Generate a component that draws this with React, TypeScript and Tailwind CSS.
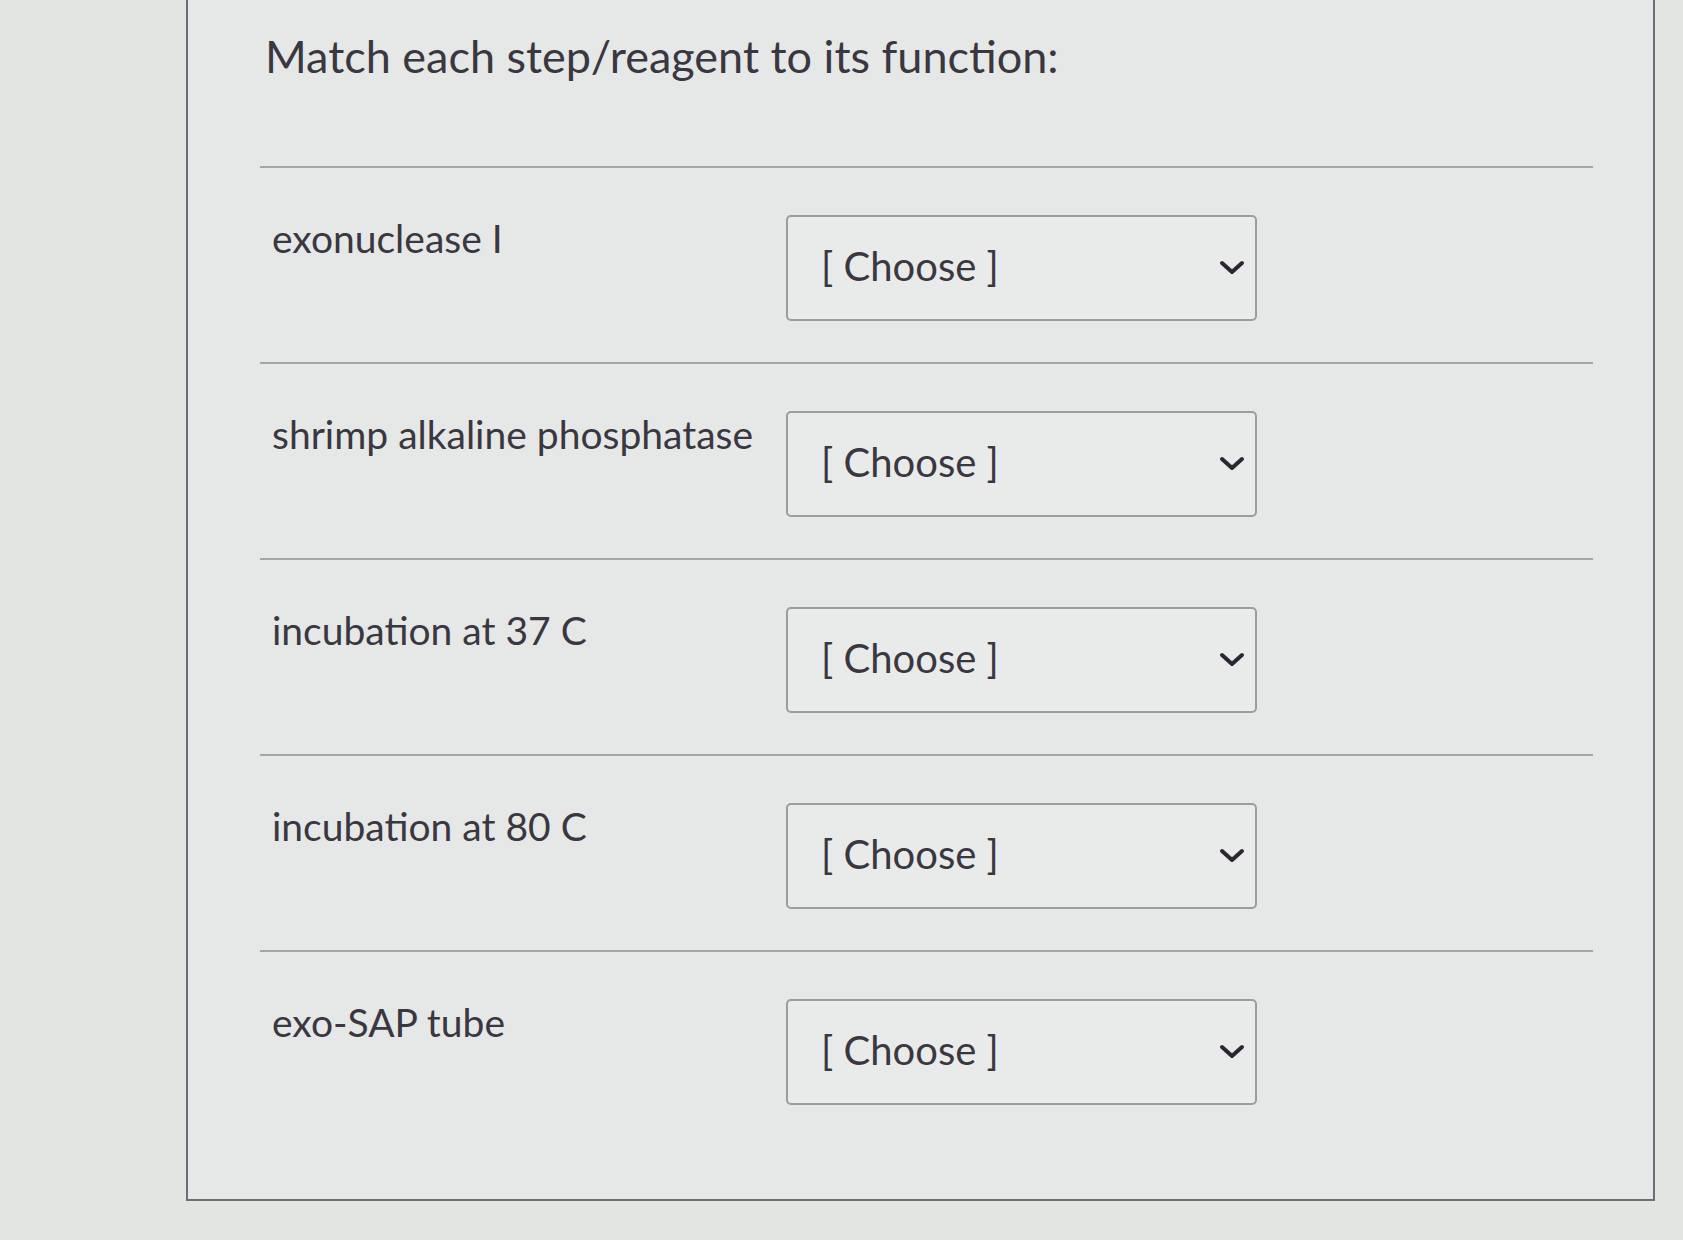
import React from 'react';

const rows = [
  'exonuclease I',
  'shrimp alkaline phosphatase',
  'incubation at 37 C',
  'incubation at 80 C',
  'exo-SAP tube',
];

const Chevron = () => (
  <svg width="26" height="16" viewBox="0 0 26 16" fill="none">
    <path d="M3 3 L13 12 L23 3" stroke="#2a2732" strokeWidth="4" strokeLinecap="round" strokeLinejoin="round" />
  </svg>
);

export default function App() {
  return (
    <div
      className="w-[1683px] h-[1240px] overflow-hidden bg-[#e3e5e3] text-[#3a3741]"
      style={{ fontFamily: 'Lato, "Open Sans", sans-serif' }}
    >
      <div className="ml-[186px] w-[1469px] h-[1201px] border-l-2 border-r-2 border-b-2 border-[#6e6e76] bg-[#e6e8e7] pl-[72px] pr-[60px]">
        <h1 className="pl-[5px] pt-[28px] h-[166px] text-[45px] leading-[56px] font-normal">
          Match each step/reagent to its function:
        </h1>
        {rows.map((label, i) => (
          <div
            key={label}
            className={`flex border-t-2 border-[#a3a5aa] pt-[47px] ${i === rows.length - 1 ? 'pb-[86px]' : 'pb-[41px]'}`}
          >
            <div className="w-[526px] pl-[12px] text-[39px] leading-[46px]">{label}</div>
            <div className="flex items-center justify-between w-[471px] h-[106px] border-2 border-[#9a9ca1] rounded-[5px] bg-[#e9ebea] pl-[33px] pr-[10px]">
              <span className="text-[40px] leading-none pb-[4px]">[ Choose ]</span>
              <Chevron />
            </div>
          </div>
        ))}
      </div>
    </div>
  );
}
